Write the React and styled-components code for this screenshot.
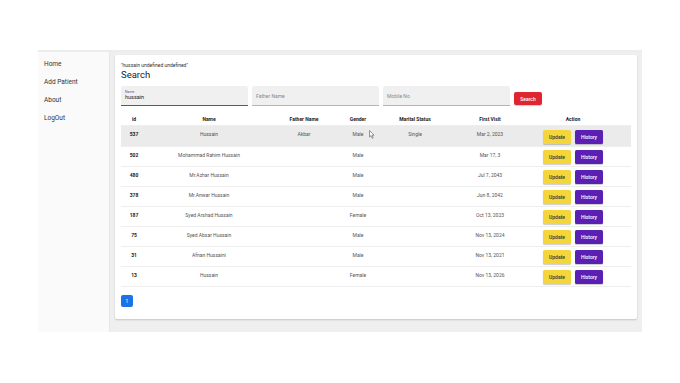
import React from "react";
import styled, { createGlobalStyle } from "styled-components";

const Global = createGlobalStyle`
  html, body { margin: 0; padding: 0; background: #ffffff; }
  body { font-family: Roboto, "Noto Sans", Arial, sans-serif; }
`;

const Frame = styled.div`
  margin: 50px 0 0 38px;
  width: 604px;
  height: 282px;
  display: flex;
  border-top: 2px solid #ececec;
  box-sizing: border-box;
`;

const Sidebar = styled.nav`
  width: 71px;
  background: #fafafa;
  display: flex;
  flex-direction: column;
  gap: 10px;
  padding: 8px 0 0 6px;
  box-sizing: border-box;
`;

const NavItem = styled.div`
  font-size: 6.5px;
  color: #333;
  line-height: 8px;
`;

const Main = styled.main`
  flex: 1;
  background: #efefef;
  border-left: 1px solid #e6e6e6;
  padding: 3px 5px 13px 5px;
  display: flex;
`;

const Card = styled.section`
  flex: 1;
  background: #fff;
  box-shadow: 0 1px 2px rgba(0,0,0,0.18);
  border-radius: 2px;
  padding: 7px 6px 0 6px;
  display: flex;
  flex-direction: column;
  position: relative;
`;

const Debug = styled.div`
  font-size: 5px;
  color: #333;
  line-height: 6px;
`;

const Title = styled.h2`
  margin: 1px 0 0 0;
  font-size: 9.5px;
  font-weight: 400;
  color: #222;
  line-height: 12px;
`;

const SearchRow = styled.div`
  display: flex;
  align-items: center;
  gap: 4px;
  margin-top: 5px;
`;

const Field = styled.div`
  width: 127px;
  height: 20px;
  box-sizing: border-box;
  background: #f0f0f0;
  border-radius: 2px 2px 0 0;
  border-bottom: 1px solid ${p => (p.$active ? "#6a3fc1" : "#b5b5b5")};
  display: flex;
  flex-direction: column;
  justify-content: center;
  padding-left: 4px;
`;

const FieldLabel = styled.span`
  font-size: ${p => (p.$small ? "3.5px" : "5px")};
  color: ${p => (p.$small ? "#6a3fc1" : "#888")};
  line-height: ${p => (p.$small ? "4px" : "6px")};
`;

const FieldValue = styled.span`
  font-size: 5.5px;
  color: #222;
  line-height: 7px;
`;

const RedButton = styled.button`
  margin-left: 0;
  margin-top: 5px;
  width: 28px;
  height: 13px;
  border: none;
  border-radius: 2px;
  background: #df2630;
  color: #fff;
  font-family: inherit;
  font-size: 5px;
  font-weight: 500;
  padding: 0;
  box-shadow: 0 1px 1px rgba(0,0,0,0.2);
`;

const Table = styled.table`
  width: 510px;
  margin-top: 7px;
  border-collapse: collapse;
  table-layout: fixed;
`;

const Th = styled.th`
  font-size: 5px;
  font-weight: 700;
  color: #222;
  height: 12px;
  padding: 0 ${p => (p.$pr ? "14px" : "0")} 0 0;
  text-align: center;
  border-bottom: 1px solid #eeeeee;
`;

const Tr = styled.tr`
  background: ${p => (p.$hl ? "#ebebeb" : "#fff")};
`;

const Td = styled.td`
  font-size: 5px;
  color: ${p => (p.$bold ? "#222" : "#555")};
  font-weight: ${p => (p.$bold ? 700 : 400)};
  text-align: center;
  vertical-align: top;
  padding: 5px 0 0 0;
  height: ${p => (p.$tall ? "21px" : "20px")};
  box-sizing: border-box;
  border-bottom: 1px solid #eeeeee;
`;

const ActionTd = styled.td`
  vertical-align: middle;
  text-align: center;
  padding: 0 14px 0 0;
  border-bottom: 1px solid #eeeeee;
  white-space: nowrap;
`;

const ActBtn = styled.button`
  width: 28px;
  height: 14px;
  margin: 3px 2px 0 2px;
  border: none;
  border-radius: 1.5px;
  padding: 0;
  font-family: inherit;
  font-size: 5px;
  font-weight: 500;
  background: ${p => (p.$kind === "update" ? "#f4d63c" : "#5a20b3")};
  color: ${p => (p.$kind === "update" ? "#333" : "#fff")};
  box-shadow: 0 1px 1px rgba(0,0,0,0.2);
  vertical-align: top;
`;

const Pager = styled.div`
  margin-top: 8px;
  display: flex;
`;

const PageBtn = styled.div`
  width: 12px;
  height: 12px;
  border-radius: 2px;
  background: #1a73e8;
  color: #fff;
  font-size: 5px;
  display: flex;
  align-items: center;
  justify-content: center;
`;

const Cursor = styled.svg`
  position: absolute;
  left: 254px;
  top: 75px;
`;

const rows = [
  { id: 537, name: "Hussain", father: "Akbar", gender: "Male", marital: "Single", visit: "Mar 2, 2023", hl: true },
  { id: 502, name: "Mohammad Rahim Hussain", father: "", gender: "Male", marital: "", visit: "Mar 17, 3" },
  { id: 480, name: "Mr.Azhar Hussain", father: "", gender: "Male", marital: "", visit: "Jul 7, 2043" },
  { id: 378, name: "Mr.Anwar Hussain", father: "", gender: "Male", marital: "", visit: "Jun 8, 2042" },
  { id: 187, name: "Syed Arshad Hussain", father: "", gender: "Female", marital: "", visit: "Oct 13, 2023" },
  { id: 75, name: "Syed Absar Hussain", father: "", gender: "Male", marital: "", visit: "Nov 13, 2024" },
  { id: 31, name: "Afnan Hussaini", father: "", gender: "Male", marital: "", visit: "Nov 13, 2021" },
  { id: 13, name: "Hussain", father: "", gender: "Female", marital: "", visit: "Nov 13, 2026" },
];

export default function App() {
  return (
    <>
      <Global />
      <Frame>
        <Sidebar>
          <NavItem>Home</NavItem>
          <NavItem>Add Patient</NavItem>
          <NavItem>About</NavItem>
          <NavItem>LogOut</NavItem>
        </Sidebar>
        <Main>
          <Card>
            <Debug>"hussain undefined undefined"</Debug>
            <Title>Search</Title>
            <SearchRow>
              <Field $active>
                <FieldLabel $small>Name</FieldLabel>
                <FieldValue>hussain</FieldValue>
              </Field>
              <Field>
                <FieldLabel>Father Name</FieldLabel>
              </Field>
              <Field>
                <FieldLabel>Mobile No</FieldLabel>
              </Field>
              <RedButton>Search</RedButton>
            </SearchRow>
            <Table>
              <colgroup>
                <col style={{ width: 26 }} />
                <col style={{ width: 124 }} />
                <col style={{ width: 66 }} />
                <col style={{ width: 42 }} />
                <col style={{ width: 72 }} />
                <col style={{ width: 78 }} />
                <col style={{ width: 102 }} />
              </colgroup>
              <thead>
                <tr>
                  <Th>id</Th>
                  <Th>Name</Th>
                  <Th>Father Name</Th>
                  <Th>Gender</Th>
                  <Th>Marital Status</Th>
                  <Th>First Visit</Th>
                  <Th $pr>Action</Th>
                </tr>
              </thead>
              <tbody>
                {rows.map(r => (
                  <Tr key={r.id} $hl={r.hl}>
                    <Td $bold $tall={r.hl}>{r.id}</Td>
                    <Td $tall={r.hl}>{r.name}</Td>
                    <Td $tall={r.hl}>{r.father}</Td>
                    <Td $tall={r.hl}>{r.gender}</Td>
                    <Td $tall={r.hl}>{r.marital}</Td>
                    <Td $tall={r.hl}>{r.visit}</Td>
                    <ActionTd>
                      <ActBtn $kind="update">Update</ActBtn>
                      <ActBtn $kind="history">History</ActBtn>
                    </ActionTd>
                  </Tr>
                ))}
              </tbody>
            </Table>
            <Pager>
              <PageBtn>1</PageBtn>
            </Pager>
            <Cursor width="6" height="9" viewBox="0 0 6 9">
              <path d="M0.5 0.5 L0.5 7 L2 5.6 L3.2 8.3 L4.2 7.9 L3 5.2 L5 5.2 Z" fill="#fff" stroke="#555" strokeWidth="0.6" />
            </Cursor>
          </Card>
        </Main>
      </Frame>
    </>
  );
}
